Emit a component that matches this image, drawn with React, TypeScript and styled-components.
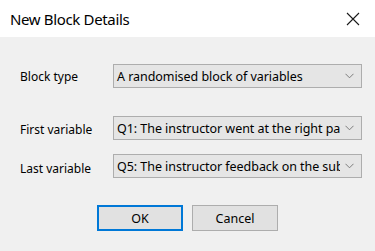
import React from "react";
import styled, { createGlobalStyle } from "styled-components";

const GlobalStyle = createGlobalStyle`
  html, body {
    margin: 0;
    padding: 0;
    background: #f0f0f0;
  }
  body {
    font-family: "Noto Sans", "Open Sans", sans-serif;
    color: #000;
  }
`;

const Dialog = styled.div`
  width: 375px;
  height: 251px;
  display: flex;
  flex-direction: column;
  background: #f0f0f0;
  overflow: hidden;
`;

const TitleBar = styled.div`
  height: 37px;
  background: #ffffff;
  display: flex;
  align-items: center;
  justify-content: space-between;
  padding: 0 15px 0 10px;
  box-sizing: border-box;
`;

const Title = styled.span`
  font-size: 15px;
  color: #000;
  letter-spacing: -0.35px;
  padding-top: 1px;
`;

const CloseButton = styled.button`
  width: 14px;
  height: 14px;
  border: none;
  background: transparent;
  padding: 0;
  display: flex;
  align-items: center;
  justify-content: center;
  margin-top: 1px;
`;

const Body = styled.div`
  flex: 1;
  padding: 27px 13px 0 20px;
  display: flex;
  flex-direction: column;
`;

const Form = styled.div`
  display: flex;
  flex-direction: column;
`;

const Row = styled.div<{ $gap: number }>`
  display: grid;
  grid-template-columns: 93px 249px;
  align-items: center;
  margin-top: ${(p) => p.$gap}px;
  height: 24px;
`;

const Label = styled.label<{ $drop?: number }>`
  font-size: 12px;
  color: #000;
  padding-top: ${(p) => p.$drop ?? 0}px;
`;

const Combo = styled.div`
  height: 24px;
  box-sizing: border-box;
  border: 1px solid #adadad;
  background: #e5e5e5;
  display: flex;
  align-items: center;
`;

const ComboText = styled.span`
  flex: 1;
  min-width: 0;
  overflow: hidden;
  white-space: nowrap;
  font-size: 12.5px;
  letter-spacing: -0.05px;
  padding-left: 3px;
  margin-right: 5px;
`;

const Chevron = styled.svg`
  flex: none;
  width: 9px;
  height: 6px;
  margin-right: 7px;
`;

const ButtonRow = styled.div`
  display: flex;
  gap: 9px;
  margin-top: 27px;
  padding-left: 77px;
`;

const Button = styled.button<{ $default?: boolean }>`
  width: 86px;
  height: 26px;
  box-sizing: border-box;
  background: #e1e1e1;
  border: ${(p) => (p.$default ? "2px solid #0078d7" : "1px solid #adadad")};
  font-family: "Noto Sans", "Open Sans", sans-serif;
  font-size: 12.5px;
  color: #000;
  padding: 0;
`;

const ComboBox: React.FC<{ value: string }> = ({ value }) => (
  <Combo>
    <ComboText>{value}</ComboText>
    <Chevron viewBox="0 0 9 6">
      <path d="M0.5 0.8 L4.5 4.8 L8.5 0.8" fill="none" stroke="#707070" strokeWidth="0.9" />
    </Chevron>
  </Combo>
);

export default function App() {
  return (
    <>
      <GlobalStyle />
      <Dialog>
        <TitleBar>
          <Title>New Block Details</Title>
          <CloseButton aria-label="Close">
            <svg width="14" height="14" viewBox="0 0 14 14">
              <path d="M1 1 L13 13 M13 1 L1 13" stroke="#1a1a1a" strokeWidth="1.1" fill="none" />
            </svg>
          </CloseButton>
        </TitleBar>
        <Body>
          <Form>
            <Row $gap={0}>
              <Label $drop={1}>Block type</Label>
              <ComboBox value="A randomised block of variables" />
            </Row>
            <Row $gap={28}>
              <Label $drop={2}>First variable</Label>
              <ComboBox value="Q1: The instructor went at the right pace" />
            </Row>
            <Row $gap={14}>
              <Label $drop={4}>Last variable</Label>
              <ComboBox value="Q5: The instructor feedback on the subject" />
            </Row>
          </Form>
          <ButtonRow>
            <Button $default>OK</Button>
            <Button>Cancel</Button>
          </ButtonRow>
        </Body>
      </Dialog>
    </>
  );
}
